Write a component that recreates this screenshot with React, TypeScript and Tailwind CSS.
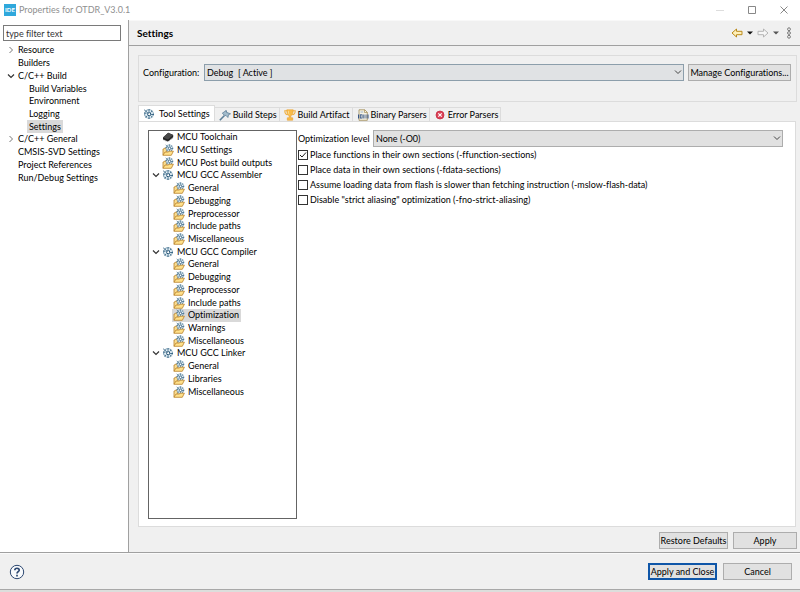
import { useState, type ReactNode } from 'react'

type TreeRow = {
  label: string
  level: number
  icon?: 'chip' | 'folder' | 'gear'
  open?: boolean
  closed?: boolean
}

const pages: TreeRow[] = [
  { label: 'Resource', level: 0, closed: true },
  { label: 'Builders', level: 0 },
  { label: 'C/C++ Build', level: 0, open: true },
  { label: 'Build Variables', level: 1 },
  { label: 'Environment', level: 1 },
  { label: 'Logging', level: 1 },
  { label: 'Settings', level: 1 },
  { label: 'C/C++ General', level: 0, closed: true },
  { label: 'CMSIS-SVD Settings', level: 0 },
  { label: 'Project References', level: 0 },
  { label: 'Run/Debug Settings', level: 0 },
]

const tools: TreeRow[] = [
  { label: 'MCU Toolchain', level: 0, icon: 'chip' },
  { label: 'MCU Settings', level: 0, icon: 'folder' },
  { label: 'MCU Post build outputs', level: 0, icon: 'folder' },
  { label: 'MCU GCC Assembler', level: 0, icon: 'gear', open: true },
  { label: 'General', level: 1, icon: 'folder' },
  { label: 'Debugging', level: 1, icon: 'folder' },
  { label: 'Preprocessor', level: 1, icon: 'folder' },
  { label: 'Include paths', level: 1, icon: 'folder' },
  { label: 'Miscellaneous', level: 1, icon: 'folder' },
  { label: 'MCU GCC Compiler', level: 0, icon: 'gear', open: true },
  { label: 'General', level: 1, icon: 'folder' },
  { label: 'Debugging', level: 1, icon: 'folder' },
  { label: 'Preprocessor', level: 1, icon: 'folder' },
  { label: 'Include paths', level: 1, icon: 'folder' },
  { label: 'Optimization', level: 1, icon: 'folder' },
  { label: 'Warnings', level: 1, icon: 'folder' },
  { label: 'Miscellaneous', level: 1, icon: 'folder' },
  { label: 'MCU GCC Linker', level: 0, icon: 'gear', open: true },
  { label: 'General', level: 1, icon: 'folder' },
  { label: 'Libraries', level: 1, icon: 'folder' },
  { label: 'Miscellaneous', level: 1, icon: 'folder' },
]

const initialFlags = [
  { id: 'ffunction', label: 'Place functions in their own sections (-ffunction-sections)', on: true },
  { id: 'fdata', label: 'Place data in their own sections (-fdata-sections)', on: false },
  { id: 'mslow', label: 'Assume loading data from flash is slower than fetching instruction (-mslow-flash-data)', on: false },
  { id: 'alias', label: 'Disable "strict aliasing" optimization (-fno-strict-aliasing)', on: false },
]

const GearShape = () => (
  <>
    <circle cx="6" cy="6" r="4.4" fill="#e4f0f6" stroke="#5a839d" strokeWidth=".9" strokeDasharray="2.2 .6" />
    <path d="M1.2 1.8l3.6 3M1 5.2h2.5M6 1.2v2.6M9.3 2.8L7.6 4.6M11 6.5H8.2M2.2 9.3l2.2-1.5M6 10.8V8.4M9.4 9.2L7.8 7.6" stroke="#2f5f80" strokeWidth=".9" fill="none" />
    <circle cx="6.2" cy="6.2" r="1.6" fill="#fff" stroke="#235274" strokeWidth="1" />
  </>
)

const GearIcon = () => (
  <svg viewBox="0 0 12 12" className="h-3 w-3 shrink-0" aria-hidden="true">
    <GearShape />
  </svg>
)

const FolderIcon = () => (
  <svg viewBox="0 0 12 12" className="h-3 w-3 shrink-0" aria-hidden="true">
    <path d="M1 11V5h.8l.6-.9H4l.8 1V8" fill="#f9dc90" stroke="#b9822a" strokeWidth=".8" />
    <g transform="translate(2.8 -.4) scale(.76)">
      <GearShape />
    </g>
    <path d="M.9 11.3L3 8h3.200l.9-.8h4.300L9.300 11.300z" fill="#ffe08a" stroke="#b9822a" strokeWidth=".8" strokeLinejoin="round" />
  </svg>
)

const ChipIcon = () => (
  <svg viewBox="0 0 12 12" className="h-3 w-3 shrink-0" aria-hidden="true">
    <path d="M1 6.5L6.2 1.8l5 2.2v2.2L6 10.6 1 8.4z" fill="#222" />
    <path d="M1 6.5L6.2 1.8l5 2.2L6 8.6z" fill="#484848" />
    <path d="M2 8.4v1M3.6 9.2v1M5.2 9.9v1M7.4 9.1v1M9 7.8v1M10.4 6.7v1" stroke="#8a8a8a" strokeWidth=".7" />
  </svg>
)

const WrenchIcon = () => (
  <svg viewBox="0 0 12 12" className="h-3 w-3 shrink-0" aria-hidden="true">
    <path d="M.8 11.2l4.700-4.700" stroke="#5c7f99" strokeWidth="1.6" />
    <path d="M3.3 4.2L6.8 1.8l1 1.7 3.7 1.3-2 .9-.6 2.8-1.700-1.900-1.800-.4z" fill="#a3bccc" stroke="#5f8098" strokeWidth=".8" strokeLinejoin="round" />
    <path d="M7 1l.8 2.5" stroke="#5f8098" strokeWidth=".8" />
  </svg>
)

const TrophyIcon = () => (
  <svg viewBox="0 0 12 12" className="h-3 w-3 shrink-0" aria-hidden="true">
    <path d="M3 1.8H.8c0 2.6.9 3.9 3 4M9 1.8h2.200c0 2.600-.9 3.900-3 4" fill="none" stroke="#f0b040" strokeWidth="1.1" />
    <path d="M2.8.8h6.400c0 3.400-.6 5.200-2.400 6v2h1.900v2.400H3.300V8.800h1.900v-2C3.400 6 2.800 4.200 2.800.8z" fill="#f8bc48" stroke="#e8a030" strokeWidth=".6" />
    <path d="M4.4 1.8c0 1.8.2 2.9.8 3.700" stroke="#fde3a0" strokeWidth=".8" fill="none" />
  </svg>
)

const BinaryIcon = () => (
  <svg viewBox="0 0 12 12" className="h-3 w-3 shrink-0" aria-hidden="true">
    <path d="M2 .8h5.800l2.500 2.500v8H2z" fill="#f8f4e4" stroke="#a08a55" strokeWidth=".8" />
    <path d="M7.5.8v2.700h2.800" fill="none" stroke="#a08a55" strokeWidth=".7" />
    <path d="M3.5 3h2.800" stroke="#8ba6c4" strokeWidth=".8" />
    <path d="M1.6 5.5v4M6.900 5.500v4M11 5.500v4" stroke="#284a80" strokeWidth="1" />
    <rect x="3.3" y="5.8" width="1.8" height="3.3" fill="none" stroke="#284a80" strokeWidth=".8" />
    <path d="M9 5.5v4" stroke="#284a80" strokeWidth=".8" />
  </svg>
)

const ErrorIcon = () => (
  <svg viewBox="0 0 12 12" className="h-3 w-3 shrink-0" aria-hidden="true">
    <circle cx="6" cy="6" r="4" fill="#dc4257" stroke="#c0263e" strokeWidth=".7" />
    <path d="M4.3 4.3l3.400 3.400M7.700 4.300L4.300 7.700" stroke="#fff" strokeWidth="1.1" />
  </svg>
)

const Twisty = ({ row }: { row: TreeRow }) => (
  <svg viewBox="0 0 8 8" className="h-2 w-2 shrink-0" fill="none" aria-hidden="true">
    {row.open && <path d="M1 2.5l3 3 3-3" stroke="#333" strokeWidth="1.2" />}
    {row.closed && <path d="M2.500 1l3 3-3 3" stroke="#777" strokeWidth="1" />}
  </svg>
)

const rowIcons = { chip: <ChipIcon />, folder: <FolderIcon />, gear: <GearIcon /> }

const tabs = [
  { label: 'Tool Settings', icon: <GearIcon /> },
  { label: 'Build Steps', icon: <WrenchIcon /> },
  { label: 'Build Artifact', icon: <TrophyIcon /> },
  { label: 'Binary Parsers', icon: <BinaryIcon /> },
  { label: 'Error Parsers', icon: <ErrorIcon /> },
]

const PushButton = ({ children, primary, className = '' }: { children: ReactNode; primary?: boolean; className?: string }) => (
  <button
    type="button"
    className={`h-[17px] whitespace-nowrap bg-[#e1e1e1] text-center leading-[13px] ${
      primary ? 'border-2 border-[#0f56a8]' : 'border border-[#adadad]'
    } ${className}`}
  >
    {children}
  </button>
)

const Combo = ({ id, value, className }: { id: string; value: string; className: string }) => (
  <div className="relative min-w-0 flex-1">
    <select id={id} defaultValue={value} className={`block h-[17px] w-full appearance-none rounded-none border pl-[2px] leading-[15px] ${className}`}>
      <option value={value}>{value}</option>
    </select>
    <svg viewBox="0 0 8 8" className="pointer-events-none absolute top-1 right-[2px] h-2 w-2" fill="none" aria-hidden="true">
      <path d="M1 2.5l3 3 3-3" stroke="#444" strokeWidth="1" />
    </svg>
  </div>
)

export default function App() {
  const [page, setPage] = useState(6)
  const [tool, setTool] = useState(14)
  const [tab, setTab] = useState(0)
  const [flags, setFlags] = useState(initialFlags)

  const toggle = (id: string) => setFlags(flags.map((f) => (f.id === id ? { ...f, on: !f.on } : f)))

  return (
    <div className="flex min-h-screen flex-col bg-[#f0f0f0] font-['Lato','Noto_Sans',sans-serif] text-[9px] leading-3 text-black [font-variant-ligatures:none]">
      <header className="flex h-5 items-center bg-white pl-1 text-[#8f8f8f]">
        <span className="flex h-3 w-3 items-center justify-center bg-[#2fa8dc] text-[6px] font-bold leading-3 text-white">IDE</span>
        <h1 className="ml-[3px] flex-1">Properties for OTDR_V3.0.1</h1>
        <button type="button" aria-label="Minimize" className="flex w-8 justify-center">
          <svg viewBox="0 0 8 8" className="h-2 w-2"><path d="M0 4.500h8" stroke="#ddd" /></svg>
        </button>
        <button type="button" aria-label="Maximize" className="flex w-8 justify-center">
          <svg viewBox="0 0 8 8" className="h-2 w-2"><path d="M.5.5h7v7h-7z" fill="none" stroke="#888" /></svg>
        </button>
        <button type="button" aria-label="Close" className="flex w-8 justify-center">
          <svg viewBox="0 0 8 8" className="h-2 w-2"><path d="M.5.5l7 7M7.500.5l-7 7" stroke="#888" /></svg>
        </button>
      </header>

      <div className="flex flex-1 border-b border-[#a0a0a0]">
        <nav className="w-[129px] shrink-0 border-r border-[#a0a0a0] bg-white pt-[5px]">
          <input
            type="text"
            aria-label="Filter"
            placeholder="type filter text"
            className="ml-[3px] block h-4 w-[118px] border border-[#7a7a7a] bg-white pl-[2px] leading-3 placeholder:text-[#333]"
          />
          <ul className="mt-[3px] grid h-[140px] auto-rows-fr">
            {pages.map((row, i) => (
              <li key={row.label} className={`flex items-center ${row.level ? 'pl-[18px]' : 'pl-[7px]'}`}>
                <Twisty row={row} />
                <button
                  type="button"
                  onClick={() => setPage(i)}
                  className={`ml-px h-full px-[2px] leading-3 ${i === page ? 'bg-[#d9d9d9]' : ''}`}
                >
                  {row.label}
                </button>
              </li>
            ))}
          </ul>
        </nav>

        <main className="flex min-w-0 flex-1 flex-col border-t border-[#f8f8f8]">
          <div className="flex h-[25px] items-center border-b border-[#a0a0a0] px-2">
            <h2 className="flex-1 text-[10px] font-bold">Settings</h2>
            <div className="flex items-center gap-1">
              <button type="button" aria-label="Back">
                <svg viewBox="0 0 12 10" className="h-[10px] w-3"><path d="M1 5l4.500-4v2.300H11v3.400H5.500V9z" fill="#fff0b8" stroke="#b98a1c" strokeLinejoin="round" /></svg>
              </button>
              <button type="button" aria-label="Back history">
                <svg viewBox="0 0 6 4" className="h-1 w-[6px]"><path d="M0 .5h6L3 3.500z" fill="#111" /></svg>
              </button>
              <button type="button" aria-label="Forward">
                <svg viewBox="0 0 12 10" className="h-[10px] w-3"><path d="M11 5L6.500 1v2.300H1v3.400h5.500V9z" fill="#f6f6f6" stroke="#b4b4b4" strokeLinejoin="round" /></svg>
              </button>
              <button type="button" aria-label="Forward history">
                <svg viewBox="0 0 6 4" className="h-1 w-[6px]"><path d="M0 .5h6L3 3.500z" fill="#555" /></svg>
              </button>
              <button type="button" aria-label="View menu" className="ml-[3px]">
                <svg viewBox="0 0 6 12" className="h-3 w-[6px]" fill="#fff" stroke="#666" strokeWidth=".9">
                  <circle cx="3" cy="2.2" r="1.4" />
                  <circle cx="3" cy="6" r="1.4" />
                  <circle cx="3" cy="9.8" r="1.4" />
                </svg>
              </button>
            </div>
          </div>

          <div className="flex flex-1 flex-col pt-[9px] pr-[3px] pl-[9px]">
            <div className="flex h-[47px] items-start border border-[#dcdcdc] pt-2 pr-[5px] pl-1">
              <label htmlFor="config" className="w-[61px] pt-[3px]">Configuration:</label>
              <Combo id="config" value={'Debug\u00a0\u00a0[ Active ]'} className="border-[#8c9eab] bg-[#e0e2e4]" />
              <PushButton className="ml-1 w-[103px]">Manage Configurations...</PushButton>
            </div>

            <div role="tablist" className="mt-[3px] flex h-4 items-end">
              {tabs.map((t, i) => (
                <button
                  key={t.label}
                  type="button"
                  role="tab"
                  aria-selected={i === tab}
                  onClick={() => setTab(i)}
                  className={`flex items-center whitespace-nowrap border-t border-r border-[#dcdcdc] pl-1 ${
                    i === tab ? 'h-4 gap-1 border-l bg-white pr-1' : 'h-[14px] gap-[2px] pr-[2px]'
                  }`}
                >
                  {t.icon}
                  {t.label}
                </button>
              ))}
            </div>

            <section className="mr-px flex flex-1 border border-[#dcdcdc] bg-white pt-2 pr-3 pb-[7px] pl-[9px]">
              <div className="w-[149px] shrink-0 border border-[#646464]">
                <ul className="grid h-[267px] auto-rows-fr">
                  {tools.map((row, i) => (
                    <li key={i} className={`flex items-center ${row.level ? 'pl-[14px]' : 'pl-[3px]'}`}>
                      <Twisty row={row} />
                      <button
                        type="button"
                        onClick={() => setTool(i)}
                        className={`ml-px flex h-full items-center gap-[3px] pr-[2px] pl-px leading-3 ${i === tool ? 'bg-[#d9d9d9]' : ''}`}
                      >
                        {row.icon && rowIcons[row.icon]}
                        {row.label}
                      </button>
                    </li>
                  ))}
                </ul>
              </div>

              <form className="min-w-0 flex-1 pl-px">
                <div className="flex items-center">
                  <label htmlFor="level" className="w-[75px] whitespace-nowrap">Optimization level</label>
                  <Combo id="level" value="None (-O0)" className="border-[#adadad] bg-[#e1e1e1]" />
                </div>
                {flags.map((f) => (
                  <div key={f.id} className="flex h-[15px] items-center">
                    <input
                      id={f.id}
                      type="checkbox"
                      checked={f.on}
                      onChange={() => toggle(f.id)}
                      className="peer h-[10px] w-[10px] shrink-0 appearance-none border border-[#333] bg-white"
                    />
                    <svg viewBox="0 0 10 10" className="pointer-events-none invisible -ml-[10px] h-[10px] w-[10px] peer-checked:visible" fill="none" aria-hidden="true">
                      <path d="M2 5l2 2 4-4.500" stroke="#222" />
                    </svg>
                    <label htmlFor={f.id} className="ml-[2px] whitespace-nowrap">{f.label}</label>
                  </div>
                ))}
              </form>
            </section>

            <div className="flex justify-end gap-[5px] pt-[5px] pb-[3px]">
              <PushButton className="w-[69px]">Restore Defaults</PushButton>
              <PushButton className="w-16">Apply</PushButton>
            </div>
          </div>
        </main>
      </div>

      <footer className="flex h-9 items-center border-t border-[#fafafa] pr-2 pl-[9px]">
        <button type="button" aria-label="Help" className="mr-auto">
          <svg viewBox="0 0 16 16" className="h-4 w-4" fill="none" stroke="#2c4770">
            <circle cx="8" cy="8" r="6.7" strokeWidth="1" fill="#f8fafc" />
            <path d="M5.800 6.300C5.800 3.500 10.300 3.600 10.200 6.200 10.100 7.700 8 7.800 8 9.600" strokeWidth="1.7" />
            <path d="M8 10.700v1.700" strokeWidth="1.7" />
          </svg>
        </button>
        <PushButton primary className="w-[69px]">Apply and Close</PushButton>
        <PushButton className="ml-[6px] w-[69px]">Cancel</PushButton>
      </footer>
      <div className="h-[3px] border-t border-[#a8a8a8] bg-[#dcdedc]" />
    </div>
  )
}
